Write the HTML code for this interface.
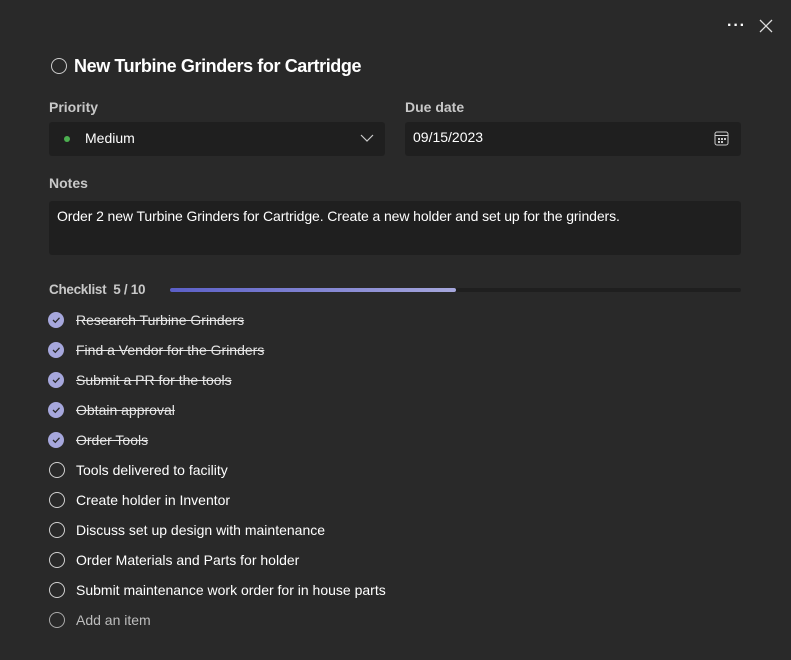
<!DOCTYPE html>
<html><head><style>
body{margin:0;width:791px;height:660px;background:#292929;font-family:"Liberation Sans",sans-serif;color:#fff;position:relative;overflow:hidden}
.a{position:absolute}
.lbl{font-size:14px;color:#c8c8c8;font-weight:bold}
.box{background:#1f1f1f;border-radius:3px}
.row{position:absolute;left:48px;height:20px;display:flex;align-items:center;font-size:14px;color:#fff}
.c{width:16px;height:16px;border:1.5px solid #d0d0d0;border-radius:50%;margin-right:11px;box-sizing:border-box;flex:none}
.d{width:16px;height:16px;border-radius:50%;background:#a6a7dc;margin-right:12px;flex:none;display:flex;align-items:center;justify-content:center}
.s{text-decoration:line-through;color:#e6e6e6}
</style></head><body>
<div class="a" style="left:727px;top:17px;font-size:16px;letter-spacing:1px;font-weight:bold">···</div>
<svg class="a" style="left:759px;top:19px" width="14" height="14"><path d="M1 1L13 13M13 1L1 13" stroke="#ddd" stroke-width="1.3"/></svg>
<div class="a" style="left:51px;top:58px;width:16px;height:16px;border:1.5px solid #ccc;border-radius:50%;box-sizing:border-box"></div>
<div class="a" style="left:74px;top:56px;font-size:18px;font-weight:bold;letter-spacing:-0.4px">New Turbine Grinders for Cartridge</div>
<div class="a lbl" style="left:49px;top:99px">Priority</div>
<div class="a lbl" style="left:405px;top:99px">Due date</div>
<div class="a box" style="left:49px;top:122px;width:336px;height:34px"></div>
<div class="a" style="left:64px;top:136px;width:6px;height:6px;border-radius:50%;background:#4caf50"></div>
<div class="a" style="left:85px;top:130px;font-size:14px">Medium</div>
<svg class="a" style="left:360px;top:133px" width="14" height="10"><path d="M1 2L7 8L13 2" stroke="#ccc" fill="none" stroke-width="1.2"/></svg>
<div class="a box" style="left:405px;top:122px;width:336px;height:34px"></div>
<div class="a" style="left:413px;top:129px;font-size:14px">09/15/2023</div>
<svg class="a" style="left:714px;top:131px" width="15" height="15"><rect x="1" y="1" width="13" height="13" rx="2" stroke="#ccc" fill="none"/><path d="M1 4.5H14" stroke="#ccc"/><g fill="#ccc"><rect x="4" y="7" width="2" height="2"/><rect x="7" y="7" width="2" height="2"/><rect x="10" y="7" width="2" height="2"/><rect x="4" y="10" width="2" height="2"/><rect x="7" y="10" width="2" height="2"/></g></svg>
<div class="a lbl" style="left:49px;top:175px">Notes</div>
<div class="a box" style="left:49px;top:201px;width:692px;height:54px"></div>
<div class="a" style="left:57px;top:208px;font-size:14px;letter-spacing:-0.1px">Order 2 new Turbine Grinders for Cartridge. Create a new holder and set up for the grinders.</div>
<div class="a lbl" style="left:49px;top:282px;font-size:13.5px;letter-spacing:-0.3px">Checklist&nbsp; 5 / 10</div>
<div class="a" style="left:170px;top:288px;width:571px;height:4px;background:#1f1f1f;border-radius:2px"></div>
<div class="a" style="left:170px;top:288px;width:286px;height:4px;background:linear-gradient(90deg,#5b5fc7,#a6a7dc);border-radius:2px"></div>
<div class="row" style="top:310px"><div class="d"><svg width="10" height="10"><path d="M2 5L4.3 7.3L8.5 2.8" stroke="#292929" fill="none" stroke-width="1.3"/></svg></div><span class="s">Research Turbine Grinders</span></div>
<div class="row" style="top:340px"><div class="d"><svg width="10" height="10"><path d="M2 5L4.3 7.3L8.5 2.8" stroke="#292929" fill="none" stroke-width="1.3"/></svg></div><span class="s">Find a Vendor for the Grinders</span></div>
<div class="row" style="top:370px"><div class="d"><svg width="10" height="10"><path d="M2 5L4.3 7.3L8.5 2.8" stroke="#292929" fill="none" stroke-width="1.3"/></svg></div><span class="s">Submit a PR for the tools</span></div>
<div class="row" style="top:400px"><div class="d"><svg width="10" height="10"><path d="M2 5L4.3 7.3L8.5 2.8" stroke="#292929" fill="none" stroke-width="1.3"/></svg></div><span class="s">Obtain approval</span></div>
<div class="row" style="top:430px"><div class="d"><svg width="10" height="10"><path d="M2 5L4.3 7.3L8.5 2.8" stroke="#292929" fill="none" stroke-width="1.3"/></svg></div><span class="s">Order Tools</span></div>
<div class="row" style="top:460px;left:49px"><div class="c"></div>Tools delivered to facility</div>
<div class="row" style="top:490px;left:49px"><div class="c"></div>Create holder in Inventor</div>
<div class="row" style="top:520px;left:49px"><div class="c"></div>Discuss set up design with maintenance</div>
<div class="row" style="top:550px;left:49px"><div class="c"></div>Order Materials and Parts for holder</div>
<div class="row" style="top:580px;left:49px"><div class="c"></div>Submit maintenance work order for in house parts</div>
<div class="row" style="top:610px;left:49px;color:#bdbdbd"><div class="c" style="border-color:#aaa"></div>Add an item</div>
</body></html>
